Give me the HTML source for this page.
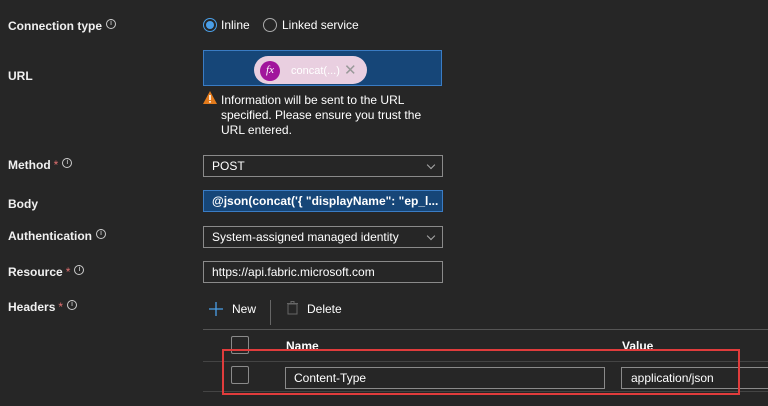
<!DOCTYPE html><html><head><style>
body{margin:0;width:768px;height:406px;background:#262626;font-family:"Liberation Sans",sans-serif;color:#fff;position:relative;overflow:hidden;font-size:12px}
.a{position:absolute}
.lbl{position:absolute;left:8px;font-weight:bold;font-size:12px;color:#f0f0f0}
.i{display:inline-block;width:8px;height:8px;border:1px solid #ccc;border-radius:50%;font-size:7px;line-height:8px;text-align:center;font-weight:normal;vertical-align:top;margin-left:4px}
.star{color:#e07070;font-weight:normal;margin-left:3px}
.box{position:absolute;left:203px;width:230px;height:20px;border:1px solid #8a8a8a;font-size:12px;line-height:20px;padding-left:8px;box-sizing:content-box;white-space:nowrap;overflow:hidden}
.chev{position:absolute;right:8px;top:6px;width:5px;height:5px;border-right:1px solid #aaa;border-bottom:1px solid #aaa;transform:rotate(45deg)}
.cb{position:absolute;width:16px;height:16px;border:1px solid #8a8a8a;border-radius:2px}
</style></head><body>
<div class="lbl" style="top:19px">Connection type<span class="i">i</span></div>
<div class="a" style="left:203px;top:18px;width:12px;height:12px;border:1px solid #4a9fe8;border-radius:50%"></div>
<div class="a" style="left:206px;top:21px;width:8px;height:8px;background:#4a9fe8;border-radius:50%"></div>
<div class="a" style="left:221px;top:18px">Inline</div>
<div class="a" style="left:263px;top:18px;width:12px;height:12px;border:1px solid #aaa;border-radius:50%"></div>
<div class="a" style="left:282px;top:18px">Linked service</div>
<div class="lbl" style="top:69px">URL</div>
<div class="a" style="left:203px;top:50px;width:237px;height:34px;background:#164678;border:1px solid #3a7cc4"></div>
<div class="a" style="left:254px;top:56px;width:113px;height:28px;background:#e9cfe0;border-radius:14px"></div>
<div class="a" style="left:260px;top:61px;width:20px;height:20px;background:#a1159c;border-radius:50%;font-family:'Liberation Serif',serif;font-style:italic;font-size:11px;text-align:center;line-height:19px">fx</div>
<div class="a" style="left:291px;top:65px;font-size:11px;color:#fff">concat(...)</div>
<div class="a" style="left:344px;top:61px;font-size:15px;color:#999">✕</div>
<svg class="a" style="left:203px;top:91px" width="14" height="13"><polygon points="7,0 14,13 0,13" fill="#e37b1c"/><rect x="6.2" y="4" width="1.6" height="5" fill="#fff"/><rect x="6.2" y="10" width="1.6" height="1.6" fill="#fff"/></svg>
<div class="a" style="left:221px;top:93px;line-height:15px;width:222px">Information will be sent to the URL specified. Please ensure you trust the URL entered.</div>
<div class="lbl" style="top:158px">Method<span class="star">*</span><span class="i">i</span></div>
<div class="box" style="top:155px">POST<div class="chev"></div></div>
<div class="lbl" style="top:197px">Body</div>
<div class="box" style="top:190px;background:#164678;border-color:#3a7cc4;font-weight:bold">@json(concat('{ "displayName": "ep_l...</div>
<div class="lbl" style="top:229px">Authentication<span class="i">i</span></div>
<div class="box" style="top:226px">System-assigned managed identity<div class="chev"></div></div>
<div class="lbl" style="top:265px">Resource<span class="star">*</span><span class="i">i</span></div>
<div class="box" style="top:261px">https://api.fabric.microsoft.com</div>
<div class="lbl" style="top:300px">Headers<span class="star">*</span><span class="i">i</span></div>
<svg class="a" style="left:209px;top:302px" width="14" height="14"><path d="M7 0V14M0 7H14" stroke="#4a9fe8" stroke-width="1.3"/></svg>
<div class="a" style="left:232px;top:302px">New</div>
<div class="a" style="left:270px;top:300px;width:1px;height:25px;background:#666"></div>
<svg class="a" style="left:287px;top:301px" width="11" height="14"><rect x="1" y="3" width="9" height="10" fill="none" stroke="#666"/><line x1="0" y1="2.5" x2="11" y2="2.5" stroke="#666"/><rect x="4" y="0.5" width="3" height="2" fill="none" stroke="#666"/></svg>
<div class="a" style="left:307px;top:302px">Delete</div>
<div class="a" style="left:203px;top:329px;width:565px;height:1px;background:#555"></div>
<div class="cb" style="left:231px;top:336px"></div>
<div class="a" style="left:286px;top:339px;font-weight:bold">Name</div>
<div class="a" style="left:622px;top:339px;font-weight:bold">Value</div>
<div class="a" style="left:203px;top:361px;width:565px;height:1px;background:#444"></div>
<div class="cb" style="left:231px;top:366px"></div>
<div class="a" style="left:285px;top:367px;width:318px;height:20px;border:1px solid #8a8a8a;line-height:20px"><span style="margin-left:8px">Content-Type</span></div>
<div class="a" style="left:621px;top:367px;width:160px;height:20px;border:1px solid #8a8a8a;line-height:20px"><span style="margin-left:9px">application/json</span></div>
<div class="a" style="left:203px;top:391px;width:565px;height:1px;background:#444"></div>
<div class="a" style="left:222px;top:349px;width:514px;height:42px;border:2px solid #e03c3c"></div>
</body></html>
